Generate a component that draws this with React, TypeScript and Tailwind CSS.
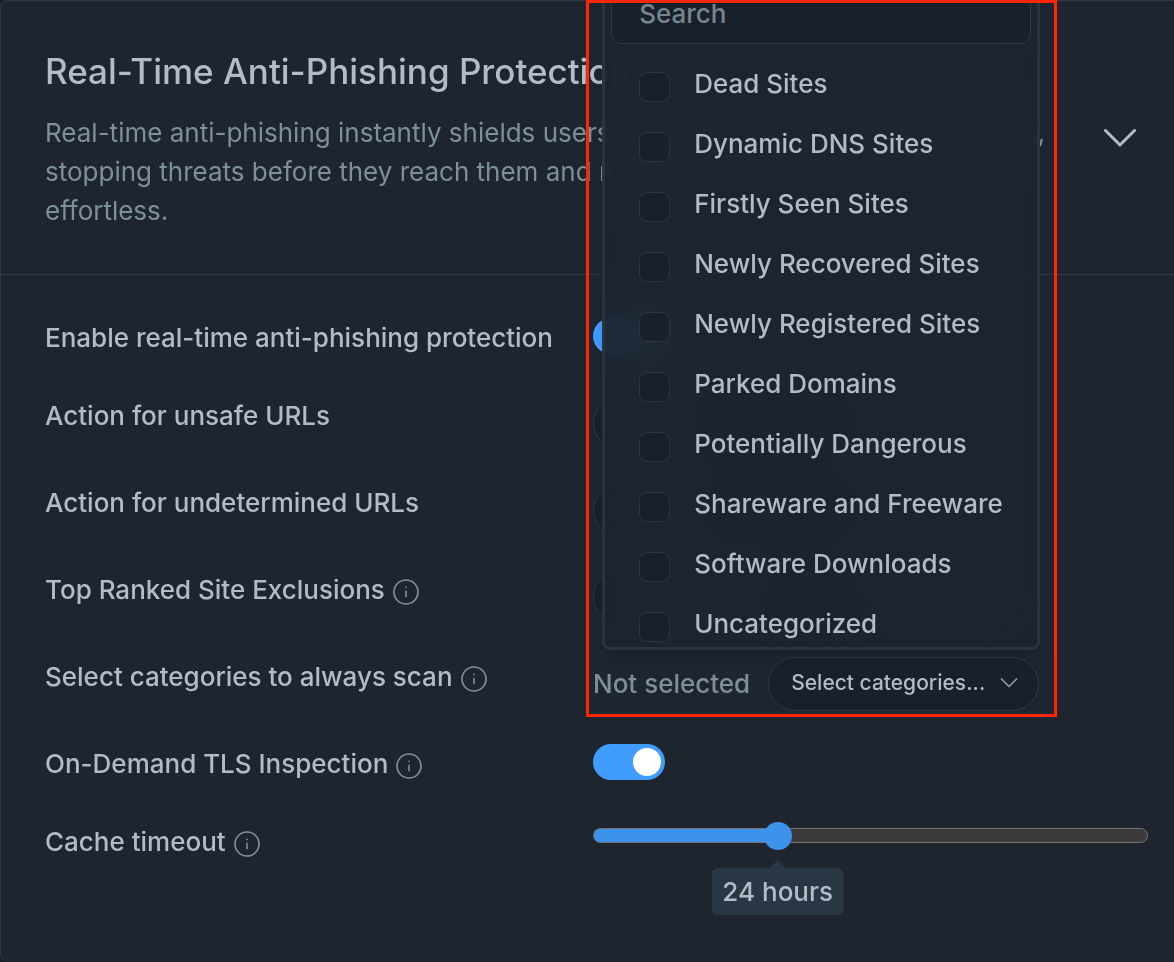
import { useState } from "react";
import type { ReactNode } from "react";

const categories = [
  "Dead Sites",
  "Dynamic DNS Sites",
  "Firstly Seen Sites",
  "Newly Recovered Sites",
  "Newly Registered Sites",
  "Parked Domains",
  "Potentially Dangerous",
  "Shareware and Freeware",
  "Software Downloads",
  "Uncategorized",
];

const InfoIcon = () => (
  <svg viewBox="0 0 26 26" className="size-[26px] shrink-0 mt-1" fill="none" stroke="#7d8f9b">
    <circle cx="13" cy="13" r="12" strokeWidth="1.7" />
    <path d="M13 11.8v6.4" strokeWidth="1.6" />
    <circle cx="13" cy="8.3" r="0.9" fill="#7d8f9b" stroke="none" />
  </svg>
);

type RowProps = {
  label: string;
  htmlFor: string;
  info?: boolean;
  short?: boolean;
  children: ReactNode;
};

const Row = ({ label, htmlFor, info, short, children }: RowProps) => (
  <div className={short ? "flex items-start min-h-[78px]" : "flex items-start min-h-[87px]"}>
    <div className="flex items-center gap-2 w-[548px] shrink-0 leading-[39px]">
      <label htmlFor={htmlFor}>{label}</label>
      {info && <InfoIcon />}
    </div>
    {children}
  </div>
);

const Toggle = ({ id }: { id: string }) => (
  <input
    id={id}
    type="checkbox"
    role="switch"
    defaultChecked
    className="appearance-none flex items-center w-[72px] h-9 p-1 rounded-full bg-[#293644] checked:bg-[#409cff] before:size-7 before:rounded-full before:bg-white checked:before:ml-auto"
  />
);

const PillSelect = ({ id, options }: { id: string; options: string[] }) => (
  <select
    id={id}
    className="appearance-none w-[270px] h-[54px] px-6 rounded-full border border-[#2c3944] bg-[#1a2029] text-[21px] text-[#7d8f9b]"
  >
    {options.map((option) => (
      <option key={option}>{option}</option>
    ))}
  </select>
);

const CategoryMenu = () => (
  <div className="absolute -right-px bottom-full mb-[7px] w-[438px] px-1.5 pt-1.5 pb-[5px] rounded-lg border-3 border-[#29343f] bg-[#1d242c]/92 backdrop-blur-xl backdrop-saturate-200 shadow-lg">
    <input
      type="search"
      placeholder="Search"
      aria-label="Search categories"
      className="block w-full h-[62px] px-[27px] rounded-[10px] border border-[#2c3b4b] bg-[#1a2029] placeholder:text-[#75848f]"
    />
    <ul className="flex flex-col gap-[30px] pt-7 px-7">
      {categories.map((category) => (
        <li key={category}>
          <label className="flex items-center gap-6 h-[30px]">
            <input
              type="checkbox"
              className="appearance-none w-[31px] h-[30px] rounded-lg border border-[#2a3742] bg-[#1a2029] checked:bg-[#409cff]"
            />
            <span className="pb-2 whitespace-nowrap">{category}</span>
          </label>
        </li>
      ))}
    </ul>
  </div>
);

const CategoryPicker = () => (
  <div className="flex items-center gap-[18px]">
    <span className="pb-0.5 text-[#7d8f9b]">Not selected</span>
    <div className="relative">
      <button
        id="categories"
        type="button"
        aria-expanded="true"
        className="flex items-center justify-between w-[271px] h-[54px] pl-[22px] pr-5 pb-0.5 rounded-full border border-[#2c3944] bg-[#1a2029] text-[21px] font-medium"
      >
        Select categories...
        <svg viewBox="0 0 18 10" className="w-[18px] h-[10px]" fill="none" stroke="#8d9aa6" strokeWidth="1.7" strokeLinecap="round" strokeLinejoin="round">
          <path d="M1.5 1 9 8.5 16.5 1" />
        </svg>
      </button>
      <CategoryMenu />
    </div>
  </div>
);

const CacheSlider = () => {
  const [hours, setHours] = useState(24);
  const ratio = (hours - 1) / 71;
  const thumb = `calc(${ratio} * (100% - 28px) + 14px)`;

  return (
    <div className="relative grow flex pt-1.5">
      <input
        id="cache"
        type="range"
        min={1}
        max={72}
        value={hours}
        onChange={(e) => setHours(Number(e.target.value))}
        className="appearance-none w-full h-[15px] rounded-full border border-[#757575] bg-[#3b3b3b] [&::-webkit-slider-thumb]:appearance-none [&::-webkit-slider-thumb]:size-7 [&::-webkit-slider-thumb]:rounded-full [&::-webkit-slider-thumb]:bg-[#3d92eb]"
        style={{ backgroundImage: `linear-gradient(to right, #3d92eb ${thumb}, transparent ${thumb})` }}
      />
      <output
        htmlFor="cache"
        className="absolute top-[46px] -translate-x-1/2 px-[11px] rounded-md bg-[#293644] leading-[47px] whitespace-nowrap before:absolute before:-top-2 before:left-1/2 before:-translate-x-1/2 before:border-x-8 before:border-b-8 before:border-x-transparent before:border-b-[#293644]"
        style={{ left: thumb }}
      >
        {hours} hours
      </output>
    </div>
  );
};

const App = () => {
  return (
    <div className="relative min-h-screen bg-[#1a212a] font-['Inter',sans-serif] font-[450] text-[26px] text-[#b3bbc7]">
      <section className="min-h-screen rounded-l-lg border-t border-l border-[#2a3a4b] bg-[#1e252f]">
        <header className="flex items-center justify-between pl-11 pr-[38px] h-[274px] border-b border-[#2a3a4b]">
          <div className="max-w-[1010px] pt-1">
            <h1 className="text-[35px] leading-[44px] font-[550]">Real-Time Anti-Phishing Protection</h1>
            <p className="mt-5 leading-[39px] font-normal text-[#7d8f9b]">
              Real-time anti-phishing instantly shields users from phishing and fraudulent sites,
              stopping threats before they reach them and making secure web browsing effortless.
            </p>
          </div>
          <button type="button" aria-label="Collapse section">
            <svg viewBox="0 0 32 18" className="w-8 h-[18px]" fill="none" stroke="#b3bbc7" strokeWidth="3" strokeLinecap="round" strokeLinejoin="round">
              <path d="M1.5 1.5 16 16 30.5 1.5" />
            </svg>
          </button>
        </header>

        <div className="flex flex-col pl-11 pr-[26px] pt-[43px]">
          <Row label="Enable real-time anti-phishing protection" htmlFor="enable" short>
            <Toggle id="enable" />
          </Row>
          <Row label="Action for unsafe URLs" htmlFor="unsafe">
            <PillSelect id="unsafe" options={["Block", "Allow"]} />
          </Row>
          <Row label="Action for undetermined URLs" htmlFor="undetermined">
            <PillSelect id="undetermined" options={["Isolate", "Block", "Allow"]} />
          </Row>
          <Row label="Top Ranked Site Exclusions" htmlFor="exclusions" info>
            <PillSelect id="exclusions" options={["Top 100,000", "None"]} />
          </Row>
          <Row label="Select categories to always scan" htmlFor="categories" info>
            <CategoryPicker />
          </Row>
          <Row label="On-Demand TLS Inspection" htmlFor="tls" info short>
            <Toggle id="tls" />
          </Row>
          <Row label="Cache timeout" htmlFor="cache" info short>
            <CacheSlider />
          </Row>
        </div>
      </section>

      {/* highlight around the category picker */}
      <div className="pointer-events-none absolute top-0 left-[586px] w-[471px] h-[717px] border-3 border-[#ff2600]" />
    </div>
  );
};

export default App;
